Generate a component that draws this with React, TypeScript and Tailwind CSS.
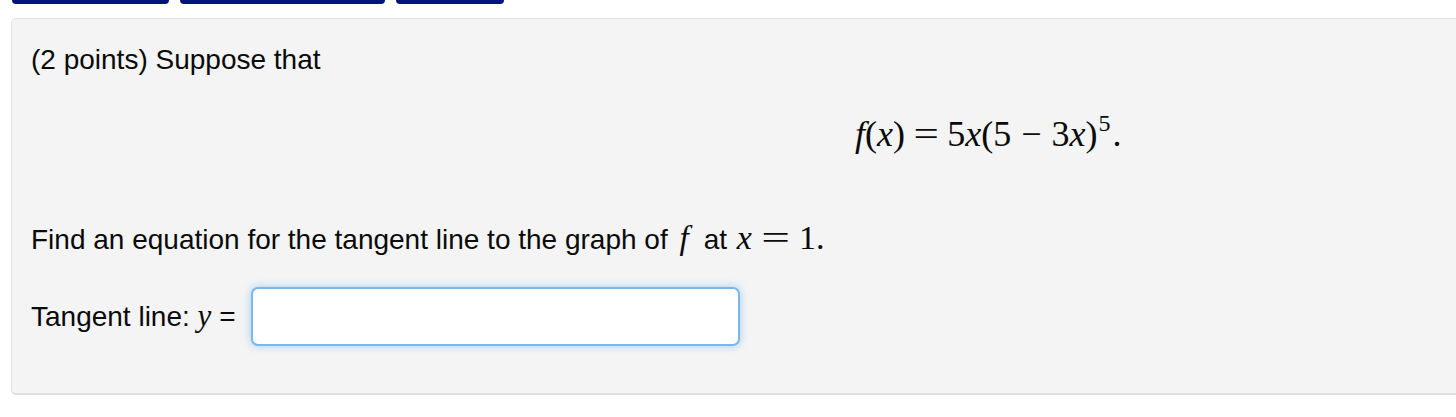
export default function App() {
  const sans = { fontFamily: '"Liberation Sans", Arial, sans-serif' };
  const serif = { fontFamily: '"Liberation Serif", "Times New Roman", serif' };
  return (
    <div className="w-[1456px] h-[417px] overflow-hidden bg-white relative" style={sans}>
      <div className="flex gap-[11px] pl-[12px] h-[4px]">
        <div className="w-[157px] h-[4px] bg-[#03137c] rounded-b-[5px]" />
        <div className="w-[205px] h-[4px] bg-[#03137c] rounded-b-[5px]" />
        <div className="w-[108px] h-[4px] bg-[#03137c] rounded-b-[5px]" />
      </div>
      <div className="ml-[11px] mt-[14px] w-[1500px] h-[377px] bg-[#f4f4f4] border border-[#e1e1e1] border-b-[2px] border-b-[#dedede] rounded-[5px] pl-[19px] pt-[24px] text-[#0a0a0a] text-[28px] leading-[34px]">
        <p>(2 points) Suppose that</p>
        <div className="mt-[37px] pl-[824px] text-[36px] leading-[40px]" style={serif}>
          <i>f</i>(<i>x</i>)
          <span className="inline-block mx-[11px] scale-x-125">=</span>5<i>x</i>(5
          <span className="mx-[10px]">−</span>3<i>x</i>)
          <span className="text-[24px] relative -top-[15px] ml-[1px]">5</span>
          <span className="ml-[2px]">.</span>
        </div>
        <p className="mt-[65px] leading-[34px]">
          Find an equation for the tangent line to the graph of{" "}
          <i className="text-[33px] leading-[20px] ml-[4px]" style={serif}>
            f
          </i>
          <span className="ml-[15px]">at</span>{" "}
          <span className="text-[34px] leading-[20px] ml-[2px]" style={serif}>
            <i>x</i>
            <span className="inline-block mx-[14px] scale-x-150">=</span>1.
          </span>
        </p>
        <div className="mt-[30px] flex items-center gap-[16px]">
          <span className="leading-[34px]">
            Tangent line:{" "}
            <i className="text-[31px] leading-[20px]" style={serif}>
              y
            </i>{" "}
            =
          </span>
          <div className="w-[489px] h-[59px] bg-white border-2 border-[#7ab7ec] rounded-[7px] shadow-[0_0_8px_rgba(102,175,233,0.55)]" />
        </div>
      </div>
    </div>
  );
}
